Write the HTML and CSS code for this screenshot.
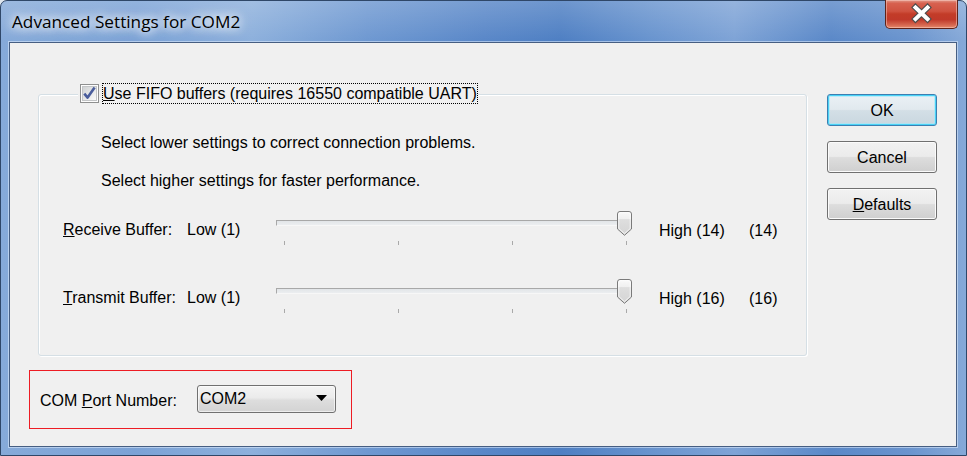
FILE: index.html
```html
<!DOCTYPE html>
<html>
<head>
<meta charset="utf-8">
<link rel="stylesheet" href="styles.css">
</head>
<body>
<div class="window">
  <div class="titlebar">
    <div class="title">Advanced Settings for COM2</div>
    <div class="close">
      <svg width="73" height="29" viewBox="0 0 73 29">
        <path d="M30.5 8.5 L42.5 20 M42.5 8.5 L30.5 20" stroke="#4d4d4d" stroke-width="6.2" stroke-linecap="square" fill="none"/>
        <path d="M30.5 8.5 L42.5 20 M42.5 8.5 L30.5 20" stroke="#ffffff" stroke-width="4" stroke-linecap="square" fill="none"/>
      </svg>
    </div>
  </div>
  <div class="client">
    <div class="left">
      <div class="group">
        <div class="legend">
          <span class="checkbox">
            <svg width="19" height="19" viewBox="0 0 19 19">
              <defs>
                <linearGradient id="cbg" x1="0" y1="0" x2="1" y2="1">
                  <stop offset="0" stop-color="#cfd1d3"/>
                  <stop offset="1" stop-color="#fbfbfb"/>
                </linearGradient>
              </defs>
              <rect x="0.5" y="0.5" width="18" height="18" fill="#fdfdfd" stroke="#8e8f8f"/>
              <rect x="2.5" y="2.5" width="14" height="14" fill="url(#cbg)" stroke="#c3c5c7"/>
              <path d="M4.3 9.6 L7.6 13.6 L14.6 3.6" stroke="#4a5d9c" stroke-width="2.6" fill="none" stroke-linejoin="round"/>
            </svg>
          </span>
          <span class="focus"><u>U</u>se FIFO buffers (requires 16550 compatible UART)</span>
        </div>
        <p class="hint hint1">Select lower settings to correct connection problems.</p>
        <p class="hint hint2">Select higher settings for faster performance.</p>
        <div class="srow row1">
          <span class="slabel"><u>R</u>eceive Buffer:</span>
          <span class="low">Low (1)</span>
          <div class="slider">
            <div class="track"></div>
            <div class="thumb">
              <svg width="15" height="25" viewBox="0 0 15 25">
                <defs>
                  <linearGradient id="thg1" x1="0" y1="0" x2="0" y2="1">
                    <stop offset="0" stop-color="#fafafa"/>
                    <stop offset="0.3" stop-color="#f0f0f0"/>
                    <stop offset="0.34" stop-color="#dedede"/>
                    <stop offset="1" stop-color="#d4d4d4"/>
                  </linearGradient>
                </defs>
                <path d="M0.5 3 Q0.5 0.5 3 0.5 H12 Q14.5 0.5 14.5 3 V18 L7.5 24.3 L0.5 18 Z" fill="url(#thg1)" stroke="#7a7a7a"/>
                <path d="M1.8 3.2 Q1.8 1.8 3.2 1.8 H11.8 Q13.2 1.8 13.2 3.2 V17.5 L7.5 22.6 L1.8 17.5 Z" fill="none" stroke="#ffffff" stroke-opacity="0.7"/>
              </svg>
            </div>
            <div class="ticks"><i></i><i></i><i></i><i></i></div>
          </div>
          <span class="high">High (14)</span>
          <span class="val">(14)</span>
        </div>
        <div class="srow row2">
          <span class="slabel"><u>T</u>ransmit Buffer:</span>
          <span class="low">Low (1)</span>
          <div class="slider">
            <div class="track"></div>
            <div class="thumb">
              <svg width="15" height="25" viewBox="0 0 15 25">
                <defs>
                  <linearGradient id="thg2" x1="0" y1="0" x2="0" y2="1">
                    <stop offset="0" stop-color="#fafafa"/>
                    <stop offset="0.3" stop-color="#f0f0f0"/>
                    <stop offset="0.34" stop-color="#dedede"/>
                    <stop offset="1" stop-color="#d4d4d4"/>
                  </linearGradient>
                </defs>
                <path d="M0.5 3 Q0.5 0.5 3 0.5 H12 Q14.5 0.5 14.5 3 V18 L7.5 24.3 L0.5 18 Z" fill="url(#thg2)" stroke="#7a7a7a"/>
                <path d="M1.8 3.2 Q1.8 1.8 3.2 1.8 H11.8 Q13.2 1.8 13.2 3.2 V17.5 L7.5 22.6 L1.8 17.5 Z" fill="none" stroke="#ffffff" stroke-opacity="0.7"/>
              </svg>
            </div>
            <div class="ticks"><i></i><i></i><i></i><i></i></div>
          </div>
          <span class="high">High (16)</span>
          <span class="val">(16)</span>
        </div>
      </div>
      <div class="comport">
        <span class="clabel">COM <u>P</u>ort Number:</span>
        <div class="combo">
          <span class="ctext">COM2</span>
          <svg class="carrow" width="11" height="6" viewBox="0 0 11 6"><path d="M0 0 H11 L5.5 6 Z" fill="#000"/></svg>
        </div>
      </div>
    </div>
    <div class="buttons">
      <div class="btn default">OK</div>
      <div class="btn">Cancel</div>
      <div class="btn"><u>D</u>efaults</div>
    </div>
  </div>
</div>
</body>
</html>
```
FILE: styles.css
```css
html, body {
  margin: 0;
  padding: 0;
}
body {
  width: 967px;
  height: 456px;
  overflow: hidden;
  background: #dfe6ee;
  font-family: "Liberation Sans", Arial, sans-serif;
  font-size: 16px;
  color: #000;
}
.window {
  box-sizing: border-box;
  width: 967px;
  height: 456px;
  border: 1px solid #2f4768;
  border-radius: 7px 7px 0 0;
  background:
    linear-gradient(180deg, rgba(255,255,255,0.18) 0%, rgba(255,255,255,0) 40px),
    linear-gradient(90deg, #86aad9 0%, #7ba2d6 14%, #8db0dc 26%, #6e98d1 38%, #5987c8 50%, #4e7fc3 58%, #6a95cf 68%, #7ea3d6 76%, #5a88c8 86%, #6a94ce 94%, #86a9d8 100%);
  display: flex;
  flex-direction: column;
}
.titlebar {
  height: 41px;
  display: flex;
  justify-content: space-between;
  align-items: flex-start;
  padding-right: 8px;
  flex: none;
}
.title {
  font-family: "Open Sans", "Noto Sans", sans-serif;
  font-size: 17.2px;
  line-height: 20px;
  padding: 11px 0 0 11px;
  color: #000;
  text-shadow: 0 0 8px #fff, 0 0 12px rgba(255,255,255,0.9), 0 0 16px rgba(255,255,255,0.8);
}
.close {
  width: 73px;
  height: 29px;
  margin-top: -1px;
  box-sizing: border-box;
  border: 1px solid #5e2219;
  border-top: none;
  border-radius: 0 0 5px 5px;
  background: linear-gradient(180deg, #e29a8b 0%, #d7614f 12%, #cf5240 40%, #c33c28 50%, #c0392a 70%, #d76a52 90%, #e78c6e 100%);
  box-shadow: inset 0 0 0 1px rgba(255,220,210,0.45);
  overflow: hidden;
}
.close svg {
  display: block;
  margin: -1px 0 0 -1px;
}
.client {
  box-sizing: border-box;
  width: 948px;
  height: 405px;
  margin-left: 8px;
  border: 1px solid #465e82;
  box-shadow: 0 0 0 1px rgba(225,238,255,0.55);
  background: #f0f0f0;
  display: flex;
  padding: 51px 0 0 19px;
}
.left {
  width: 778px;
  display: flex;
  flex-direction: column;
}
.group {
  box-sizing: border-box;
  width: 769px;
  height: 262px;
  margin-left: 9px;
  border: 1px solid #d5dfe5;
  border-radius: 3px;
  box-shadow: inset 1px 1px 0 #ffffff, 1px 1px 0 #ffffff;
}
.legend {
  display: flex;
  align-items: center;
  width: fit-content;
  height: 21px;
  margin: -12px 0 0 39px;
  padding: 0 0 0 2px;
  background: #f0f0f0;
}
.checkbox {
  display: block;
  width: 19px;
  height: 19px;
}
.checkbox svg {
  display: block;
}
.focus {
  display: block;
  margin-left: 3px;
  border: 1px dotted #000;
  line-height: 19px;
  white-space: nowrap;
}
.hint {
  margin: 0 0 0 62px;
  line-height: 18px;
}
.hint1 {
  margin-top: 30px;
}
.hint2 {
  margin-top: 20px;
}
.srow {
  display: flex;
  height: 34px;
  margin-left: 24px;
  line-height: 18px;
}
.row1 {
  margin-top: 21px;
}
.row2 {
  margin-top: 34px;
}
.slabel {
  width: 124px;
  padding-top: 10px;
  white-space: nowrap;
}
.low {
  width: 89px;
  padding-top: 10px;
  white-space: nowrap;
}
.high {
  width: 90px;
  padding-top: 11px;
  white-space: nowrap;
}
.val {
  padding-top: 11px;
}
.slider {
  position: relative;
  width: 356px;
  height: 34px;
  margin-right: 27px;
}
.track {
  position: absolute;
  left: 0;
  top: 9px;
  width: 354px;
  height: 6px;
  box-sizing: border-box;
  border-top: 1px solid #a8a8a8;
  border-left: 1px solid #a8a8a8;
  border-bottom: 1px solid #f7f7f7;
  border-right: 1px solid #f7f7f7;
  background: linear-gradient(180deg, #e2e5e8, #eceef0);
}
.thumb {
  position: absolute;
  left: 341px;
  top: 0;
  width: 15px;
  height: 25px;
}
.thumb svg {
  display: block;
}
.ticks {
  position: absolute;
  left: 0;
  right: 0;
  top: 30px;
  height: 4px;
  display: flex;
  justify-content: space-between;
  padding: 0 5px 0 8px;
}
.ticks i {
  display: block;
  width: 1px;
  height: 4px;
  background: #a9a9a9;
}
.comport {
  box-sizing: border-box;
  width: 323px;
  height: 59px;
  margin-top: 14px;
  border: 1px solid #ed1c24;
  display: flex;
  align-items: center;
  padding: 0 0 2px 10px;
}
.clabel {
  width: 157px;
  line-height: 18px;
  padding-top: 4px;
  white-space: nowrap;
}
.combo {
  box-sizing: border-box;
  width: 139px;
  height: 28px;
  border: 1px solid #707070;
  border-radius: 3px;
  background: linear-gradient(180deg, #f4f4f4 0%, #ebebeb 45%, #dddddd 55%, #d3d3d3 100%);
  box-shadow: inset 0 0 0 1px rgba(255,255,255,0.6);
  display: flex;
  align-items: center;
  justify-content: space-between;
  padding: 0 8px 0 2px;
}
.ctext {
  line-height: 18px;
  padding-top: 1px;
}
.carrow {
  display: block;
  margin-top: -1px;
}
.buttons {
  margin-left: 20px;
  display: flex;
  flex-direction: column;
  gap: 15px;
}
.btn {
  box-sizing: border-box;
  width: 110px;
  height: 32px;
  border: 1px solid #707070;
  border-radius: 3px;
  background: linear-gradient(180deg, #f2f2f2 0%, #ebebeb 48%, #dddddd 52%, #cfcfcf 100%);
  box-shadow: inset 0 0 0 1px #fbfbfb;
  text-align: center;
  line-height: 31px;
}
.btn.default {
  border-color: #3c7fb1;
  background: linear-gradient(180deg, #eaf1f5 0%, #e1e9ee 48%, #d3dfe6 52%, #c9d7df 100%);
  box-shadow: inset 0 0 0 1px #49d2f6, inset 0 0 0 2px rgba(160,232,250,0.6);
}
```
